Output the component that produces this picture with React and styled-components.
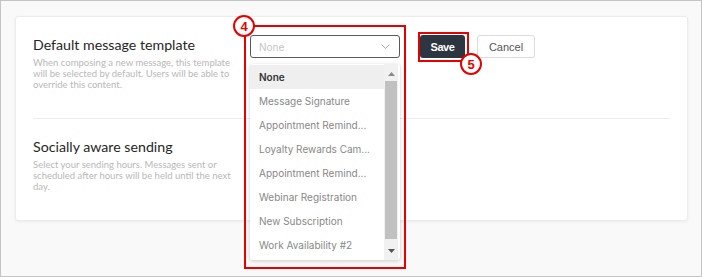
import React from "react";
import styled, { createGlobalStyle } from "styled-components";

const GlobalStyle = createGlobalStyle`
  body {
    margin: 0;
    font-family: Lato, "Noto Sans", sans-serif;
  }
`;

const options = [
  "None",
  "Message Signature",
  "Appointment Remind...",
  "Loyalty Rewards Cam...",
  "Appointment Remind...",
  "Webinar Registration",
  "New Subscription",
  "Work Availability #2",
];

const App = () => {
  return (
    <Page>
      <GlobalStyle />
      <Card>
        <Section>
          <Info>
            <Title>Default message template</Title>
            <Desc>
              When composing a new message, this template will be selected by
              default. Users will be able to override this content.
            </Desc>
          </Info>
          <Controls>
            <SelectWrap>
              <Select>
                <Placeholder>None</Placeholder>
                <svg width="9" height="5" viewBox="0 0 9 5">
                  <path d="M0.5 0.5l4 4 4-4" fill="none" stroke="#aaa" strokeWidth="1" />
                </svg>
              </Select>
              <Menu>
                <List>
                  {options.map((opt, i) => (
                    <Option key={i} active={i === 0}>
                      {opt}
                    </Option>
                  ))}
                </List>
                <Scrollbar>
                  <Arrow>
                    <svg width="7" height="4" viewBox="0 0 7 4">
                      <path d="M0 4L3.5 0 7 4z" fill="#8a8a8a" />
                    </svg>
                  </Arrow>
                  <Thumb />
                  <Arrow>
                    <svg width="7" height="4" viewBox="0 0 7 4">
                      <path d="M0 0L3.5 4 7 0z" fill="#555" />
                    </svg>
                  </Arrow>
                </Scrollbar>
              </Menu>
            </SelectWrap>
            <SaveButton>Save</SaveButton>
            <CancelButton>Cancel</CancelButton>
          </Controls>
        </Section>
        <Divider />
        <Section>
          <Info>
            <Title>Socially aware sending</Title>
            <Desc>
              Select your sending hours. Messages sent or scheduled after hours
              will be held until the next day.
            </Desc>
          </Info>
        </Section>
      </Card>

      <Callout left={243} top={24} width={162} height={244} />
      <Badge x={243} y={25}>4</Badge>
      <Callout left={417} top={31} width={51} height={30} />
      <Badge x={470} y={63}>5</Badge>
    </Page>
  );
};

const Page = styled.div`
  position: relative;
  width: 702px;
  height: 277px;
  box-sizing: border-box;
  border: 1px solid #c4c4c4;
  background: #f9f9f9;
  padding: 15px 0 0 14px;
  overflow: hidden;
`;

const Card = styled.div`
  width: 673px;
  height: 205px;
  box-sizing: border-box;
  background: #fff;
  border: 1px solid #ececec;
  border-radius: 3px;
  box-shadow: 0 1px 3px rgba(0, 0, 0, 0.06);
  padding: 0 17px;
`;

const Section = styled.div`
  display: grid;
  grid-template-columns: 217px auto;
  padding-top: 18px;
  height: 101px;
  box-sizing: border-box;
`;

const Info = styled.div`
  display: flex;
  flex-direction: column;
`;

const Title = styled.div`
  font-size: 14.2px;
  line-height: 20px;
  color: #262626;
  margin-bottom: 2px;
`;

const Desc = styled.div`
  font-size: 9.5px;
  line-height: 11px;
  color: #b8b8b8;
  width: 205px;
`;

const Divider = styled.div`
  height: 1px;
  background: #ececec;
`;

const Controls = styled.div`
  display: flex;
  align-items: flex-start;
`;

const SelectWrap = styled.div`
  position: relative;
  width: 150px;
  margin-right: 20px;
`;

const Select = styled.div`
  height: 23px;
  box-sizing: border-box;
  border: 1px solid #5a5a5a;
  border-radius: 3px;
  display: flex;
  align-items: center;
  justify-content: space-between;
  padding: 0 9px 0 8px;
  background: #fff;
`;

const Placeholder = styled.span`
  font-family: Inter, sans-serif;
  font-size: 10px;
  color: #c4c4c4;
`;

const Menu = styled.div`
  position: absolute;
  top: 29px;
  left: 0;
  width: 150px;
  height: 196px;
  background: #fff;
  border-radius: 3px;
  box-shadow: 0 1px 4px rgba(0, 0, 0, 0.18);
  display: flex;
  overflow: hidden;
`;

const List = styled.div`
  flex: 1;
  padding-top: 1px;
`;

const Option = styled.div`
  height: 24px;
  display: flex;
  align-items: center;
  padding-left: 9px;
  font-family: Inter, sans-serif;
  font-size: 10px;
  white-space: nowrap;
  color: ${(p) => (p.active ? "#333" : "#888")};
  font-weight: ${(p) => (p.active ? 600 : 400)};
  background: ${(p) => (p.active ? "#efefef" : "transparent")};
`;

const Scrollbar = styled.div`
  width: 14px;
  margin-right: 2px;
  background: #f1f1f1;
  display: flex;
  flex-direction: column;
  padding: 2px 0;
`;

const Arrow = styled.div`
  height: 15px;
  display: flex;
  align-items: center;
  justify-content: center;
`;

const Thumb = styled.div`
  flex: 1;
  background: #c1c1c1;
  margin: 0 1px 4px;
`;

const SaveButton = styled.button`
  width: 45px;
  height: 23px;
  border: none;
  border-radius: 3px;
  background: #2d3640;
  color: #fff;
  font-family: "Liberation Sans", Arial, sans-serif;
  font-weight: 700;
  font-size: 11px;
  letter-spacing: -0.4px;
  padding: 0;
  margin-right: 12px;
`;

const CancelButton = styled.button`
  width: 58px;
  height: 23px;
  border: 1px solid #dcdcdc;
  border-radius: 3px;
  background: #fff;
  color: #555;
  font-family: "Liberation Sans", Arial, sans-serif;
  font-size: 11px;
  padding: 0;
`;

const Callout = styled.div`
  position: absolute;
  left: ${(p) => p.left}px;
  top: ${(p) => p.top}px;
  width: ${(p) => p.width}px;
  height: ${(p) => p.height}px;
  box-sizing: border-box;
  border: 2px solid #e60000;
  pointer-events: none;
`;

const Badge = styled.div`
  position: absolute;
  left: ${(p) => p.x - 11}px;
  top: ${(p) => p.y - 11}px;
  width: 22px;
  height: 22px;
  box-sizing: border-box;
  border-radius: 50%;
  border: 2px solid #e60000;
  background: #fff;
  color: #e60000;
  font-family: "Liberation Sans", Arial, sans-serif;
  font-weight: 700;
  font-size: 13px;
  display: flex;
  align-items: center;
  justify-content: center;
`;

export default App;
